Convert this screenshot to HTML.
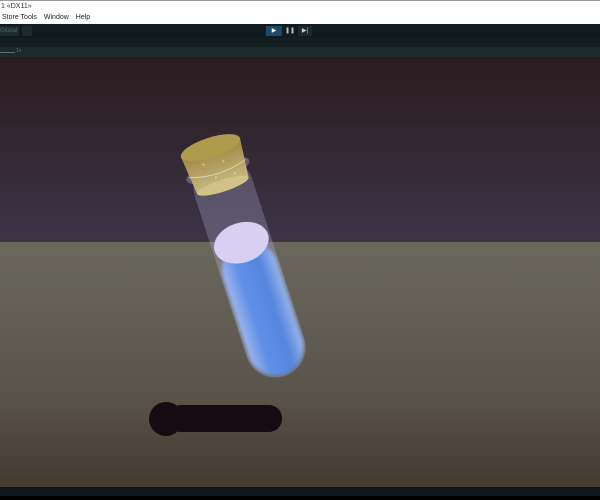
<!DOCTYPE html>
<html><head><style>
body{margin:0;width:600px;height:500px;overflow:hidden;font-family:"Liberation Sans",sans-serif;background:#000;position:relative}
.t{position:absolute;left:0;top:0;width:600px;height:12px;background:#fff;font-size:7px;color:#333;line-height:12px;padding-left:1px;border-top:1px solid #999;box-sizing:border-box}
.m{position:absolute;left:0;top:12px;width:600px;height:12px;background:#fff;font-size:7px;color:#222;line-height:12px}
.m span{margin-left:2px;margin-right:5px}
.tb{position:absolute;left:0;top:24px;width:600px;height:14px;background:#111b1d}
.r2{position:absolute;left:0;top:38px;width:600px;height:9px;background:#141f22}
.r3{position:absolute;left:0;top:47px;width:600px;height:10px;background:#1c2a2e;font-size:5px;color:#5a7075}
.bb{position:absolute;left:0;top:487px;width:600px;height:13px;background:#0e181a}
</style></head><body>
<div class="t">1 «DX11»</div>
<div class="m"><span>Store Tools</span><span>Window</span><span>Help</span></div>
<div class="tb">
<div style="position:absolute;left:0;top:2px;width:19px;height:10px;background:#1a2a2e;font-size:6px;color:#4e6a70;line-height:10px">Global</div>
<div style="position:absolute;left:22px;top:2px;width:10px;height:10px;background:#1a2a2e"></div>
<div style="position:absolute;left:266px;top:2px;width:16px;height:10px;background:#1c4a6c;color:#fff;font-size:6px;text-align:center;line-height:10px">▶</div>
<div style="position:absolute;left:284px;top:2px;width:12px;height:10px;color:#bbb;font-size:6px;text-align:center;line-height:10px">❚❚</div>
<div style="position:absolute;left:298px;top:2px;width:14px;height:10px;background:#1a2a2e;color:#ccc;font-size:6px;text-align:center;line-height:10px">▶|</div>
</div>
<div class="r2"></div>
<div class="r3"><div style="position:absolute;left:0;top:5px;width:15px;height:1px;background:#5a7075"></div><span style="position:absolute;left:16px;top:1px">1x</span></div>
<svg style="position:absolute;left:0;top:57px" width="600" height="430" viewBox="0 57 600 430">
<defs>
<linearGradient id="w" x1="0" y1="0" x2="0" y2="1"><stop offset="0" stop-color="#2a1c1e"/><stop offset="1" stop-color="#3c3447"/></linearGradient>
<linearGradient id="f" x1="0" y1="0" x2="0" y2="1"><stop offset="0" stop-color="#6a675d"/><stop offset="0.6" stop-color="#5a554c"/><stop offset="1" stop-color="#443a30"/></linearGradient>
<linearGradient id="liq" x1="0" y1="0" x2="1" y2="0"><stop offset="0" stop-color="#9fb6ee"/><stop offset="0.3" stop-color="#5f8fe6"/><stop offset="0.7" stop-color="#5585dc"/><stop offset="1" stop-color="#98b4ec"/></linearGradient>
<linearGradient id="ck" x1="0" y1="0" x2="0" y2="1"><stop offset="0" stop-color="#9c8642"/><stop offset="1" stop-color="#c9b980"/></linearGradient>
<filter id="b"><feGaussianBlur stdDeviation="1.5"/></filter>
</defs>
<rect x="0" y="57" width="600" height="185" fill="url(#w)"/>
<rect x="0" y="242" width="600" height="245" fill="url(#f)"/>
<circle cx="166" cy="419" r="17" fill="#170b12"/>
<rect x="168" y="405" width="114" height="27" rx="13" fill="#170b12"/>
<g transform="translate(208,140) rotate(-18)">
<rect x="-30" y="20" width="60" height="228" rx="30" fill="#c8c8f0" opacity="0.25"/>
<rect x="-28" y="108" width="56" height="138" rx="28" fill="url(#liq)" filter="url(#b)"/>
<ellipse cx="0" cy="108" rx="28" ry="20" fill="#d8cff2"/>
<ellipse cx="0" cy="32" rx="33" ry="10" fill="#b8b8e0" opacity="0.35"/>
<path d="M-31 8 L31 8 L27 48 L-27 48 Z" fill="url(#ck)"/>
<ellipse cx="0" cy="48" rx="27" ry="6" fill="#d0c288"/>
<ellipse cx="0" cy="8" rx="31" ry="10" fill="#b09a4c"/>
<path d="M-30 30 Q0 40 30 30" stroke="#eee" stroke-width="1" fill="none" opacity="0.6"/>
<g fill="#eee" opacity="0.6"><circle cx="-12" cy="22" r="1"/><circle cx="8" cy="25" r="1"/><circle cx="-4" cy="38" r="1"/><circle cx="15" cy="40" r="1"/></g>
</g>
</svg>
<div class="bb"></div>
<div style="position:absolute;left:0;top:496px;width:600px;height:4px;background:#000"></div>
</body></html>
